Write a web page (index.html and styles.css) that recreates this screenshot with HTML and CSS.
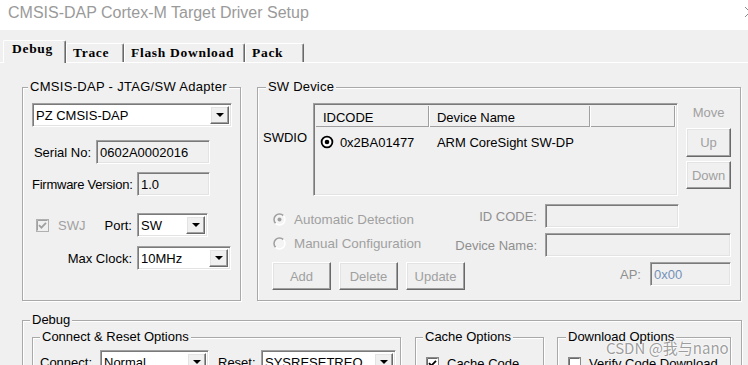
FILE: index.html
```html
<!DOCTYPE html>
<html>
<head>
<meta charset="utf-8">
<link rel="stylesheet" href="styles.css">
</head>
<body>
<div class="window">
  <div class="titlebar">
    <span class="title">CMSIS-DAP Cortex-M Target Driver Setup</span>
    <svg class="close" width="12" height="12" viewBox="0 0 12 12"><path d="M1 1 L11 11 M11 1 L1 11" stroke="#8a8a8a" stroke-width="1" fill="none"/></svg>
  </div>
  <div class="tabstrip">
    <div class="tab active">Debug</div>
    <div class="tab t-trace">Trace</div>
    <div class="tab t-flash">Flash Download</div>
    <div class="tab t-pack">Pack</div>
  </div>
  <div class="page">
    <div class="toprow">
      <div class="group adapter">
        <span class="legend">CMSIS-DAP - JTAG/SW Adapter</span>
        <div class="combo w200">
          <span class="val">PZ CMSIS-DAP</span>
          <span class="ddbtn"><svg width="8" height="4" viewBox="0 0 8 4"><polygon points="0,0 8,0 4,4" fill="#000"/></svg></span>
        </div>
        <div class="frow r-serial">
          <span class="lbl w59">Serial No:</span>
          <span class="field ro w114">0602A0002016</span>
        </div>
        <div class="frow r-fw">
          <span class="lbl w100 tight">Firmware Version:</span>
          <span class="field ro w73">1.0</span>
        </div>
        <div class="frow r-swj">
          <span class="lbl w100 swjlbl">
            <svg class="chk" width="13" height="13" viewBox="0 0 13 13"><rect x="0.5" y="0.5" width="12" height="12" fill="#f0f0f0" stroke="#b0b0b0"/><path d="M1.5 11.5 V1.5 H11.5" stroke="#a0a0a0" fill="none"/><path d="M3 6.2 L5.4 8.6 L10 3.8" stroke="#a0a0a0" stroke-width="1.8" fill="none"/></svg>
            <span class="dis">SWJ</span>
            <span class="port">Port:</span>
          </span>
          <div class="combo w71">
            <span class="val">SW</span>
            <span class="ddbtn"><svg width="8" height="4" viewBox="0 0 8 4"><polygon points="0,0 8,0 4,4" fill="#000"/></svg></span>
          </div>
        </div>
        <div class="frow r-clock">
          <span class="lbl w100">Max Clock:</span>
          <div class="combo w94">
            <span class="val">10MHz</span>
            <span class="ddbtn"><svg width="8" height="4" viewBox="0 0 8 4"><polygon points="0,0 8,0 4,4" fill="#000"/></svg></span>
          </div>
        </div>
      </div>

      <div class="group swdev">
        <span class="legend">SW Device</span>
        <div class="swtop">
          <div class="swdio">SWDIO</div>
          <div class="list sunken">
            <div class="lhead">
              <span class="hc c1">IDCODE</span>
              <span class="hc c2">Device Name</span>
              <span class="hc c3"></span>
            </div>
            <div class="lrow">
              <span class="c1 rowid">
                <svg width="14" height="14" viewBox="0 0 14 14"><circle cx="7" cy="7" r="5.4" fill="#fff" stroke="#000" stroke-width="1.8"/><circle cx="7" cy="7" r="2.3" fill="#000"/></svg>
                0x2BA01477
              </span>
              <span class="c2">ARM CoreSight SW-DP</span>
            </div>
          </div>
          <div class="movecol">
            <div class="movelbl">Move</div>
            <div class="btn up">Up</div>
            <div class="btn down">Down</div>
          </div>
        </div>
        <div class="swbottom">
          <div class="detect">
            <div class="radio-row">
              <svg width="13" height="13" viewBox="0 0 13 13"><circle cx="6.5" cy="6.5" r="5.5" fill="#f4f4f4"/><path d="M2.61 10.39 A5.5 5.5 0 0 1 10.39 2.61" stroke="#a0a0a0" stroke-width="1.5" fill="none"/><path d="M10.39 2.61 A5.5 5.5 0 0 1 2.61 10.39" stroke="#ffffff" stroke-width="1.5" fill="none"/><circle cx="6.5" cy="6.5" r="2" fill="#a0a0a0"/></svg>
              <span>Automatic Detection</span>
            </div>
            <div class="radio-row r2">
              <svg width="13" height="13" viewBox="0 0 13 13"><circle cx="6.5" cy="6.5" r="5.5" fill="#f4f4f4"/><path d="M2.61 10.39 A5.5 5.5 0 0 1 10.39 2.61" stroke="#a0a0a0" stroke-width="1.5" fill="none"/><path d="M10.39 2.61 A5.5 5.5 0 0 1 2.61 10.39" stroke="#ffffff" stroke-width="1.5" fill="none"/></svg>
              <span>Manual Configuration</span>
            </div>
            <div class="btnrow">
              <div class="btn b59">Add</div>
              <div class="btn b59">Delete</div>
              <div class="btn b59">Update</div>
            </div>
          </div>
          <div class="idform">
            <span class="glbl">ID CODE:</span>
            <span class="field ro w134"></span>
            <span class="glbl">Device Name:</span>
            <span class="field ro w186"></span>
            <span class="aprow">
              <span class="glbl">AP:</span>
              <span class="field ro w81 apval">0x00</span>
            </span>
          </div>
        </div>
      </div>
    </div>

    <div class="group debug">
      <span class="legend">Debug</span>
      <div class="debugrow">
        <div class="group cr">
          <span class="legend">Connect &amp; Reset Options</span>
          <div class="crrow">
            <span class="crlbl">Connect:</span>
            <div class="combo w109">
              <span class="val">Normal</span>
              <span class="ddbtn"><svg width="8" height="4" viewBox="0 0 8 4"><polygon points="0,0 8,0 4,4" fill="#000"/></svg></span>
            </div>
            <span class="crlbl rst">Reset:</span>
            <div class="combo w135">
              <span class="val">SYSRESETREQ</span>
              <span class="ddbtn"><svg width="8" height="4" viewBox="0 0 8 4"><polygon points="0,0 8,0 4,4" fill="#000"/></svg></span>
            </div>
          </div>
        </div>
        <div class="group cache">
          <span class="legend">Cache Options</span>
          <div class="chkrow">
            <svg width="13" height="13" viewBox="0 0 13 13"><rect x="0.5" y="0.5" width="12" height="12" fill="#fff" stroke="#8a8a8a"/><path d="M1.5 11.5 V1.5 H11.5" stroke="#696969" fill="none"/><path d="M3 6.2 L5.4 8.6 L10 3.8" stroke="#000" stroke-width="1.8" fill="none"/></svg>
            <span>Cache Code</span>
          </div>
        </div>
        <div class="group download">
          <span class="legend">Download Options</span>
          <div class="chkrow">
            <svg width="13" height="13" viewBox="0 0 13 13"><rect x="0.5" y="0.5" width="12" height="12" fill="#fff" stroke="#8a8a8a"/><path d="M1.5 11.5 V1.5 H11.5" stroke="#696969" fill="none"/></svg>
            <span>Verify Code Download</span>
          </div>
        </div>
      </div>
    </div>
  </div>
  <div class="watermark">CSDN @我与nano</div>
</div>
</body>
</html>
```

FILE: styles.css
```css
* { box-sizing: border-box; }

html, body {
  margin: 0;
  padding: 0;
}

body {
  width: 748px;
  height: 365px;
  overflow: hidden;
  background: #f0f0f0;
  font-family: "Liberation Sans", Arial, sans-serif;
  font-size: 13px;
  color: #000;
}

.window {
  position: relative;
  width: 748px;
  height: 365px;
  overflow: hidden;
}

/* title bar */
.titlebar {
  height: 30px;
  background: #fff;
  display: flex;
  align-items: flex-start;
  justify-content: space-between;
  padding: 4px 0 0 8px;
}
.title {
  font-size: 16px;
  line-height: 18px;
  color: #9a9a9a;
}
.close {
  margin-top: 2px;
  margin-right: -8px;
}

/* tabs */
.tabstrip {
  height: 32px;
  display: flex;
  align-items: flex-end;
  padding-left: 3px;
}
.tab {
  font-family: "Liberation Serif", "Times New Roman", serif;
  font-weight: bold;
  font-size: 13.5px;
  letter-spacing: 0.7px;
  line-height: 18px;
  height: 19px;
  padding-left: 6px;
  background: #f0f0f0;
  border-top: 1px solid #fff;
  border-left: 1px solid #fff;
  border-right: 1px solid #696969;
  box-shadow: inset -1px 0 #a0a0a0;
  border-radius: 2px 2px 0 0;
  white-space: nowrap;
}
.tab.active {
  width: 63px;
  height: 23px;
  margin-bottom: -1px;
  padding-left: 8px;
  line-height: 16px;
  position: relative;
  z-index: 1;
}
.t-trace { width: 58px; }
.t-flash { width: 121px; }
.t-pack { width: 59px; }

/* page */
.page {
  border-top: 1px solid #fff;
  padding: 24px 0 0 22px;
}
.toprow {
  display: flex;
  gap: 16px;
}

/* group boxes */
.group {
  position: relative;
  border: 1px solid #a9a9a9;
  box-shadow: inset 1px 1px #fff, 1px 1px #fff;
}
.legend {
  position: absolute;
  top: -9px;
  left: 7px;
  padding: 0 2px;
  line-height: 15px;
  background: #f0f0f0;
  white-space: nowrap;
}
.adapter .legend { left: 5px; letter-spacing: 0.3px; }
.swdev .legend { left: 8px; letter-spacing: 0.2px; }
.download .legend { left: 8px; }

/* 3D borders */
.sunken, .field, .combo {
  border: 1px solid;
  border-color: #a0a0a0 #fff #fff #a0a0a0;
  box-shadow: inset 1px 1px #7a7a7a, inset -1px -1px #e3e3e3;
}
.btn, .ddbtn {
  border: 1px solid;
  border-color: #fff #696969 #696969 #fff;
  box-shadow: inset -1px -1px #a0a0a0, inset 1px 1px #e3e3e3;
  background: #f0f0f0;
}

/* fields */
.field {
  height: 24px;
  display: flex;
  align-items: center;
  padding-left: 3px;
  white-space: nowrap;
}
.field.ro { background: #f0f0f0; }

.combo {
  height: 24px;
  display: flex;
  align-items: stretch;
  background: #fff;
  padding: 2px;
}
.combo .val {
  flex: 1;
  display: flex;
  align-items: center;
  padding-left: 1px;
  white-space: nowrap;
  overflow: hidden;
}
.ddbtn {
  width: 19px;
  display: flex;
  align-items: center;
  justify-content: center;
}

.w59 { width: 59px; }
.w71 { width: 71px; }
.w73 { width: 73px; }
.w81 { width: 81px; }
.w94 { width: 94px; }
.w100 { width: 100px; }
.w109 { width: 109px; }
.w114 { width: 114px; }
.w134 { width: 134px; }
.w135 { width: 135px; }
.w186 { width: 186px; }
.w200 { width: 200px; }

/* adapter group */
.adapter {
  width: 219px;
  height: 214px;
  padding: 15px 0 0 9px;
}
.frow {
  display: flex;
  align-items: center;
  gap: 5px;
  height: 24px;
}
.lbl {
  text-align: right;
  white-space: nowrap;
  flex-shrink: 0;
}
.lbl.tight { letter-spacing: -0.25px; }
.r-serial { margin-top: 13px; }
.r-fw { margin-top: 8px; }
.r-swj { margin-top: 17px; }
.r-clock { margin-top: 9px; }
.swjlbl {
  display: flex;
  align-items: center;
}
.swjlbl .chk { margin-left: 4px; }
.swjlbl .dis { margin-left: 9px; color: #a0a0a0; }
.swjlbl .port { margin-left: auto; }

/* SW device group */
.swdev {
  width: 484px;
  height: 214px;
  padding: 15px 9px 0 5px;
}
.swtop {
  display: flex;
  align-items: flex-start;
}
.swdio {
  width: 50px;
  padding-top: 27px;
  line-height: 15px;
}
.list {
  width: 366px;
  height: 93px;
  background: #f0f0f0;
  padding: 2px;
}
.lhead {
  display: flex;
  height: 21px;
  box-shadow: inset 0 -1px #a0a0a0;
}
.hc {
  display: flex;
  align-items: center;
  padding: 2px 0 0 7px;
  border-right: 1px solid #a0a0a0;
  box-shadow: 1px 0 #fff;
  height: 21px;
}
.c1 { width: 113px; }
.c2 { width: 161px; }
.hc.c2 { padding-left: 8px; }
.hc.c3 { flex: 1; }
.lrow {
  display: flex;
  height: 20px;
  margin-top: 5px;
  align-items: center;
}
.rowid {
  display: flex;
  align-items: center;
  gap: 6px;
  padding-left: 4px;
}
.lrow .c2 { padding-left: 8px; }

.movecol {
  width: 45px;
  margin-left: 8px;
  display: flex;
  flex-direction: column;
}
.movelbl {
  margin-top: 2px;
  line-height: 15px;
  text-align: center;
  color: #a0a0a0;
}
.btn {
  display: flex;
  align-items: center;
  justify-content: center;
  color: #a0a0a0;
}
.btn.up { margin-top: 8px; height: 29px; }
.btn.down { margin-top: 4px; height: 28px; }

.swbottom {
  display: flex;
  margin-top: 8px;
}
.detect {
  width: 180px;
  flex-shrink: 0;
  margin-left: 9px;
  padding-top: 5px;
}
.radio-row {
  display: flex;
  align-items: center;
  height: 20px;
  color: #a0a0a0;
  font-size: 13.4px;
  white-space: nowrap;
}
.radio-row svg {
  margin-left: 1px;
  margin-right: 8px;
  flex-shrink: 0;
}
.radio-row.r2 { margin-top: 4px; }
.btnrow {
  display: flex;
  gap: 8px;
  margin-top: 9px;
  width: 193px;
}
.b59 { width: 59px; height: 28px; flex-shrink: 0; }

.idform {
  margin-left: auto;
  display: grid;
  grid-template-columns: 84px 186px;
  grid-auto-rows: 24px;
  column-gap: 8px;
  row-gap: 5px;
}
.glbl {
  color: #8f8f8f;
  text-align: right;
  align-self: center;
  white-space: nowrap;
}
.aprow {
  grid-column: 1 / span 2;
  display: flex;
  justify-content: flex-end;
  align-items: center;
  gap: 9px;
}
.apval { color: #7590b8; }

/* debug group */
.debug {
  width: 720px;
  height: 80px;
  margin-top: 19px;
  padding: 16px 0 0 9px;
}
.debugrow {
  display: flex;
}
.cr {
  width: 369px;
  height: 60px;
  padding: 12px 0 0 7px;
}
.crrow {
  display: flex;
  align-items: center;
}
.crlbl { width: 60px; }
.crlbl.rst { width: 43px; margin-left: 9px; }
.cache {
  width: 129px;
  height: 60px;
  margin-left: 14px;
  padding: 18px 0 0 10px;
}
.download {
  width: 174px;
  height: 60px;
  margin-left: 13px;
  padding: 18px 0 0 10px;
}
.chkrow {
  display: flex;
  align-items: center;
  gap: 8px;
  white-space: nowrap;
}

/* watermark */
.watermark {
  position: absolute;
  left: 606px;
  top: 338px;
  font-family: "Noto Sans CJK SC", "Liberation Sans", sans-serif;
  font-size: 15px;
  line-height: 20px;
  color: rgba(140, 140, 140, 0.85);
  text-shadow: 0 0 2px #fff, 0 0 2px #fff;
  white-space: nowrap;
}
```
